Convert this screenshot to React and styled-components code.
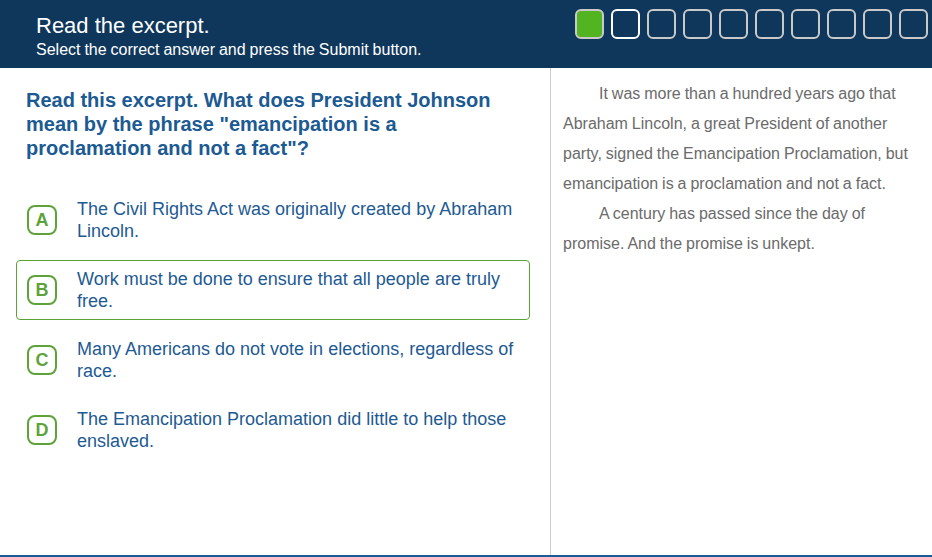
import React from "react";
import styled, { createGlobalStyle } from "styled-components";

const GlobalStyle = createGlobalStyle`
  html, body {
    margin: 0;
    padding: 0;
    background: #ffffff;
    font-family: "Liberation Sans", Arial, sans-serif;
  }
`;

const Page = styled.div`
  width: 932px;
  height: 557px;
  display: flex;
  flex-direction: column;
  overflow: hidden;
  border-bottom: 2px solid #1b5a94;
  box-sizing: border-box;
`;

const Header = styled.header`
  height: 68px;
  flex: none;
  background: #0f375c;
  display: flex;
  justify-content: space-between;
  padding: 0 4px 0 36px;
  box-sizing: border-box;
`;

const Titles = styled.div`
  padding-top: 13px;
  color: #ffffff;
`;

const Title = styled.h1`
  margin: 0;
  font-size: 22px;
  font-weight: normal;
  line-height: 26px;
`;

const Subtitle = styled.div`
  font-size: 16px;
  line-height: 20px;
  margin-top: 1px;
  word-spacing: -0.5px;
`;

const Progress = styled.div`
  display: flex;
  gap: 7px;
  padding-top: 9px;
  margin-left: -1px;
`;

const Step = styled.div`
  width: 29px;
  height: 30px;
  box-sizing: border-box;
  border-radius: 6px;
  border: 2px solid ${(p) => (p.$current ? "#ffffff" : "#c9c9c9")};
  background: ${(p) => (p.$done ? "#52b420" : "transparent")};
`;

const Body = styled.div`
  flex: 1;
  display: grid;
  grid-template-columns: 551px 1fr;
`;

const QuestionPane = styled.section`
  border-right: 1px solid #cccccc;
  padding: 20px 20px 0 16px;
`;

const Question = styled.h2`
  margin: 0 0 30px 10px;
  color: #1c5a93;
  font-size: 20px;
  font-weight: bold;
  line-height: 24px;
  width: 480px;
`;

const Options = styled.div`
  display: flex;
  flex-direction: column;
  gap: 10px;
`;

const Option = styled.div`
  height: 60px;
  box-sizing: border-box;
  display: flex;
  align-items: center;
  gap: 20px;
  padding: 0 10px;
  border: 1px solid ${(p) => (p.$selected ? "#5aa435" : "transparent")};
  border-radius: 4px;
  width: 514px;
`;

const Badge = styled.div`
  flex: 0 0 30px;
  width: 30px;
  height: 30px;
  box-sizing: border-box;
  border: 2px solid #5ea33a;
  border-radius: 8px;
  display: flex;
  align-items: center;
  justify-content: center;
  color: #5ea33a;
  font-weight: bold;
  font-size: 18px;
`;

const OptionText = styled.div`
  color: #1e5a93;
  font-size: 18px;
  line-height: 22px;
  width: 445px;
`;

const Passage = styled.section`
  padding: 11px 12px 0 12px;
  color: #6b6b6b;
  font-size: 16px;
  line-height: 30px;
  word-spacing: -0.5px;
`;

const Para = styled.p`
  margin: 0;
  text-indent: 36px;
`;

const options = [
  { letter: "A", text: "The Civil Rights Act was originally created by Abraham Lincoln." },
  { letter: "B", text: "Work must be done to ensure that all people are truly free.", selected: true },
  { letter: "C", text: "Many Americans do not vote in elections, regardless of race." },
  { letter: "D", text: "The Emancipation Proclamation did little to help those enslaved." },
];

export default function App() {
  return (
    <>
      <GlobalStyle />
      <Page>
        <Header>
          <Titles>
            <Title>Read the excerpt.</Title>
            <Subtitle>Select the correct answer and press the Submit button.</Subtitle>
          </Titles>
          <Progress>
            {Array.from({ length: 10 }).map((_, i) => (
              <Step key={i} $done={i === 0} $current={i === 1} />
            ))}
          </Progress>
        </Header>
        <Body>
          <QuestionPane>
            <Question>
              Read this excerpt. What does President Johnson mean by the phrase "emancipation is a
              proclamation and not a fact"?
            </Question>
            <Options>
              {options.map((o) => (
                <Option key={o.letter} $selected={o.selected}>
                  <Badge>{o.letter}</Badge>
                  <OptionText>{o.text}</OptionText>
                </Option>
              ))}
            </Options>
          </QuestionPane>
          <Passage>
            <Para>
              It was more than a hundred years ago that Abraham Lincoln, a great President of another
              party, signed the Emancipation Proclamation, but emancipation is a proclamation and not
              a fact.
            </Para>
            <Para>A century has passed since the day of promise. And the promise is unkept.</Para>
          </Passage>
        </Body>
      </Page>
    </>
  );
}
